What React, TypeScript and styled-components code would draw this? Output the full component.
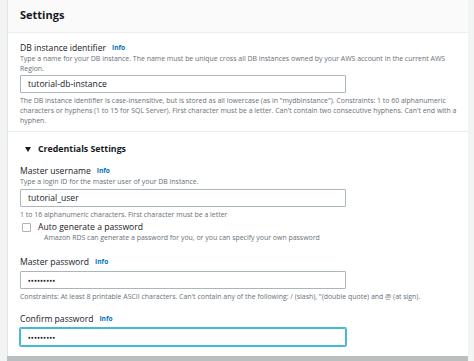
import React from "react";
import styled, { createGlobalStyle } from "styled-components";

const GlobalStyle = createGlobalStyle`
  html, body {
    margin: 0;
    padding: 0;
    background: #f2f3f3;
    font-family: "Open Sans", "Noto Sans", sans-serif;
  }
`;

const Page = styled.div`
  width: 474px;
  height: 361px;
  overflow: hidden;
  padding-left: 7px;
  box-sizing: border-box;
`;

const Panel = styled.div`
  width: 461px;
  height: 356px;
  background: #ffffff;
  border-left: 1px solid #e3e6e6;
  box-sizing: border-box;
  box-shadow: 0 5px 0 0 #b9bfc0;
  display: flex;
  flex-direction: column;
`;

const Header = styled.div`
  height: 33px;
  background: #fafafa;
  border-bottom: 1px solid #eaeded;
  box-sizing: border-box;
  display: flex;
  align-items: center;
  padding-left: 12px;
  padding-bottom: 3px;
`;

const Title = styled.h2`
  margin: 0;
  font-size: 11px;
  font-weight: 700;
  color: #16191f;
`;

const Section = styled.div<{ $divider?: boolean }>`
  padding: 0 0 0 12px;
  border-bottom: ${(p) => (p.$divider ? "1px solid #eaeded" : "none")};
`;

const Field = styled.div<{ $top: number }>`
  display: flex;
  flex-direction: column;
  padding-top: ${(p) => p.$top}px;
`;

const Label = styled.div`
  font-size: 8.6px;
  line-height: 12px;
  color: #16191f;
  display: flex;
  align-items: center;
  gap: 6px;
`;

const InfoLink = styled.span`
  font-size: 6.6px;
  font-weight: 700;
  color: #0073bb;
`;

const Desc = styled.div<{ $indent?: number }>`
  font-size: 6.95px;
  line-height: 10px;
  color: #687078;
  padding-left: ${(p) => p.$indent ?? 0}px;
  width: 446px;
`;

const Input = styled.div<{ $focused?: boolean; $top?: number }>`
  width: 326px;
  height: 18px;
  box-sizing: border-box;
  margin-top: ${(p) => p.$top ?? 1}px;
  margin-bottom: 3px;
  border: 1px solid ${(p) => (p.$focused ? "#44b9d6" : "#aab7b8")};
  box-shadow: ${(p) => (p.$focused ? "0 0 0 1px #44b9d6" : "none")};
  border-radius: 1px;
  padding-left: 7px;
  display: flex;
  align-items: center;
  font-size: 8.6px;
  color: #16191f;
`;

const Dots = styled.span`
  font-size: 4.6px;
  letter-spacing: 0.3px;
  line-height: 1;
  color: #16191f;
`;

const Toggle = styled.div`
  display: flex;
  align-items: center;
  gap: 7px;
  padding: 11px 0 0 5px;
  height: 12px;
  font-size: 8.8px;
  font-weight: 700;
  color: #16191f;
`;

const Triangle = styled.span`
  width: 0;
  height: 0;
  border-left: 3.5px solid transparent;
  border-right: 3.5px solid transparent;
  border-top: 5px solid #16191f;
`;

const CheckRow = styled.div`
  display: flex;
  align-items: center;
  gap: 7px;
  margin-top: 1px;
  padding-left: 2px;
  height: 12px;
`;

const Box = styled.span`
  width: 9px;
  height: 9px;
  border: 1px solid #aab7b8;
  border-radius: 1px;
  box-sizing: border-box;
`;

const CheckLabel = styled.span`
  font-size: 8.6px;
  color: #16191f;
`;

const Spacer = styled.div`
  height: 5px;
`;

const Info = () => <InfoLink>Info</InfoLink>;

const PASSWORD = "●●●●●●●●●";

export default function App() {
  return (
    <Page>
      <GlobalStyle />
      <Panel>
        <Header>
          <Title>Settings</Title>
        </Header>
        <Section $divider>
          <Field $top={9}>
            <Label>
              DB instance identifier <Info />
            </Label>
            <Desc>
              Type a name for your DB instance. The name must be unique cross all DB instances owned by your AWS
              account in the current AWS Region.
            </Desc>
            <Input>tutorial-db-instance</Input>
            <Desc>
              The DB instance identifier is case-insensitive, but is stored as all lowercase (as in "mydbinstance").
              Constraints: 1 to 60 alphanumeric characters or hyphens (1 to 15 for SQL Server). First character must
              be a letter. Can't contain two consecutive hyphens. Can't end with a hyphen.
            </Desc>
          </Field>
          <Spacer />
        </Section>
        <Section>
          <Toggle>
            <Triangle />
            Credentials Settings
          </Toggle>
          <Field $top={10}>
            <Label>
              Master username <Info />
            </Label>
            <Desc>Type a login ID for the master user of your DB instance.</Desc>
            <Input $top={2}>tutorial_user</Input>
            <Desc>1 to 16 alphanumeric characters. First character must be a letter</Desc>
          </Field>
          <CheckRow>
            <Box />
            <CheckLabel>Auto generate a password</CheckLabel>
          </CheckRow>
          <Desc $indent={24}>Amazon RDS can generate a password for you, or you can specify your own password</Desc>
          <Field $top={13}>
            <Label>
              Master password <Info />
            </Label>
            <Input $top={3}>
              <Dots>{PASSWORD}</Dots>
            </Input>
            <Desc>
              Constraints: At least 8 printable ASCII characters. Can't contain any of the following: / (slash),
              "(double quote) and @ (at sign).
            </Desc>
          </Field>
          <Field $top={11}>
            <Label>
              Confirm password <Info />
            </Label>
            <Input $focused $top={3}>
              <Dots>{PASSWORD}</Dots>
            </Input>
          </Field>
        </Section>
      </Panel>
    </Page>
  );
}
